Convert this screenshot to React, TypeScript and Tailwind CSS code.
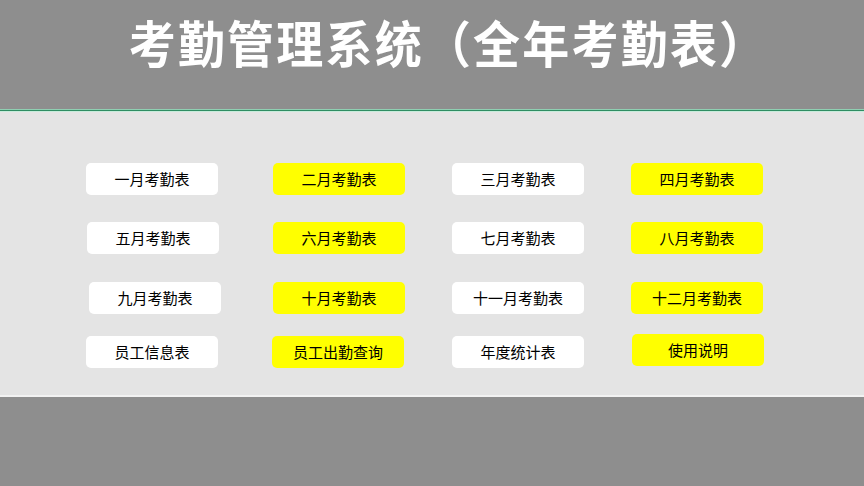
import React from 'react';

// 每一排的按钮：文字、底色、微调位置
type Btn = { label: string; yellow: boolean; shift?: string };

const rows: { top: string; items: Btn[] }[] = [
  {
    top: 'mt-[51px]',
    items: [
      { label: '一月考勤表', yellow: false, shift: '-ml-[7px] mr-[7px]' },
      { label: '二月考勤表', yellow: true },
      { label: '三月考勤表', yellow: false, shift: '-ml-[1px]' },
      { label: '四月考勤表', yellow: true, shift: '-ml-[1px]' },
    ],
  },
  {
    top: 'mt-[27px]',
    items: [
      { label: '五月考勤表', yellow: false, shift: '-ml-[6px] mr-[6px]' },
      { label: '六月考勤表', yellow: true },
      { label: '七月考勤表', yellow: false, shift: '-ml-[1px]' },
      { label: '八月考勤表', yellow: true, shift: '-ml-[1px]' },
    ],
  },
  {
    top: 'mt-[28px]',
    items: [
      { label: '九月考勤表', yellow: false, shift: '-ml-[4px] mr-[4px]' },
      { label: '十月考勤表', yellow: true },
      { label: '十一月考勤表', yellow: false, shift: '-ml-[1px]' },
      { label: '十二月考勤表', yellow: true, shift: '-ml-[1px]' },
    ],
  },
  {
    top: 'mt-[21px]',
    items: [
      { label: '员工信息表', yellow: false, shift: '-ml-[7px] mr-[7px] translate-y-[1px]' },
      { label: '员工出勤查询', yellow: true, shift: '-ml-[1px] translate-y-[1px]' },
      { label: '年度统计表', yellow: false, shift: 'translate-y-[1px]' },
      { label: '使用说明', yellow: true, shift: '-translate-y-[1px]' },
    ],
  },
];

const font = { fontFamily: '"Noto Sans CJK SC", "Noto Sans", sans-serif' };

export default function App() {
  return (
    <div className="w-[864px] h-[486px] overflow-hidden flex flex-col bg-[#8e8e8e]" style={font}>
      {/* 标题栏 */}
      <div className="h-[109px] shrink-0 bg-[#8e8e8e] flex justify-center pt-[13px]">
        <h1 className="text-white text-[47px] leading-[60px] font-bold tracking-[2.2px] pl-[33px] scale-y-[1.06]">
          考勤管理系统（全年考勤表）
        </h1>
      </div>
      <div className="h-[1px] bg-[#8fcfb2]" />
      <div className="h-[1px] bg-[#2f8d63]" />
      <div className="h-[1px] bg-[#c8ecdb]" />

      {/* 按钮区 */}
      <div className="h-[283px] shrink-0 bg-[#e4e4e4] flex flex-col pl-[93px]">
        {rows.map((row, i) => (
          <div key={i} className={`${row.top} flex gap-x-[48px]`}>
            {row.items.map((b) => (
              <button
                key={b.label}
                className={`w-[132px] h-[32px] rounded-[5px] flex items-center justify-center text-[15px] font-normal text-black ${
                  b.yellow ? 'bg-[#ffff00]' : 'bg-white'
                } ${b.shift ?? ''}`}
              >
                {b.label}
              </button>
            ))}
          </div>
        ))}
      </div>
      <div className="h-[2px] bg-[#f2f2f2]" />
      <div className="flex-1 bg-[#8e8e8e]" />
    </div>
  );
}
